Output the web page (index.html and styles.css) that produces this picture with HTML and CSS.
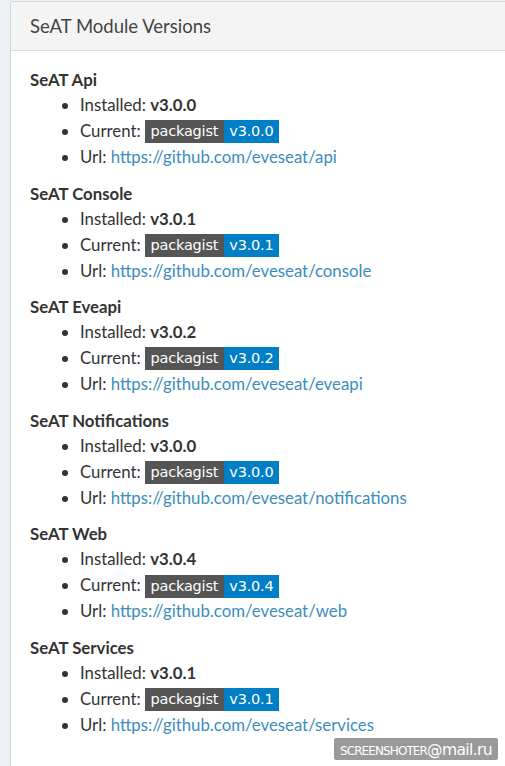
FILE: index.html
```html
<!DOCTYPE html>
<html>
<head>
<meta charset="utf-8">
<link rel="stylesheet" href="styles.css">
</head>
<body>
<div class="card">
  <div class="card-header"><h3 class="title">SeAT Module Versions</h3></div>
  <div class="card-body">
    <div class="module">
      <div class="name">SeAT Api</div>
      <ul>
        <li>Installed: <b>v3.0.0</b></li>
        <li>Current: <span class="badge"><span class="b-l">packagist</span><span class="b-r">v3.0.0</span></span></li>
        <li>Url: <a href="#">https://github.com/eveseat/api</a></li>
      </ul>
    </div>
    <div class="module">
      <div class="name">SeAT Console</div>
      <ul>
        <li>Installed: <b>v3.0.1</b></li>
        <li>Current: <span class="badge"><span class="b-l">packagist</span><span class="b-r">v3.0.1</span></span></li>
        <li>Url: <a href="#">https://github.com/eveseat/console</a></li>
      </ul>
    </div>
    <div class="module">
      <div class="name">SeAT Eveapi</div>
      <ul>
        <li>Installed: <b>v3.0.2</b></li>
        <li>Current: <span class="badge"><span class="b-l">packagist</span><span class="b-r">v3.0.2</span></span></li>
        <li>Url: <a href="#">https://github.com/eveseat/eveapi</a></li>
      </ul>
    </div>
    <div class="module">
      <div class="name">SeAT Notifications</div>
      <ul>
        <li>Installed: <b>v3.0.0</b></li>
        <li>Current: <span class="badge"><span class="b-l">packagist</span><span class="b-r">v3.0.0</span></span></li>
        <li>Url: <a href="#">https://github.com/eveseat/notifications</a></li>
      </ul>
    </div>
    <div class="module">
      <div class="name">SeAT Web</div>
      <ul>
        <li>Installed: <b>v3.0.4</b></li>
        <li>Current: <span class="badge"><span class="b-l">packagist</span><span class="b-r">v3.0.4</span></span></li>
        <li>Url: <a href="#">https://github.com/eveseat/web</a></li>
      </ul>
    </div>
    <div class="module">
      <div class="name">SeAT Services</div>
      <ul>
        <li>Installed: <b>v3.0.1</b></li>
        <li>Current: <span class="badge"><span class="b-l">packagist</span><span class="b-r">v3.0.1</span></span></li>
        <li>Url: <a href="#">https://github.com/eveseat/services</a></li>
      </ul>
    </div>
  </div>
</div>
<div class="watermark"><span class="wm-a">SCREENSHOTER</span><span class="wm-b">@mail.ru</span></div>
</body>
</html>
```
FILE: styles.css
```css
html, body {
  margin: 0;
  padding: 0;
}
body {
  background: #ecf0f5;
  font-family: "Lato", "Open Sans", sans-serif;
  font-size: 16.8px;
  color: #333;
  padding: 1px 0 0 10px;
  height: 765px;
  overflow: hidden;
}
.card {
  background: #fff;
  border: 1px solid #d2d6de;
  border-right: none;
  border-radius: 3px 0 0 0;
  min-height: 800px;
}
.card-header {
  background: #f4f4f4;
  border-bottom: 1px solid #dcdcdc;
  height: 48px;
  display: flex;
  align-items: center;
  padding-left: 19px;
}
.title {
  margin: 0;
  font-weight: 400;
  font-size: 18.5px;
  color: #444;
}
.card-body {
  padding: 17px 19px 0 19px;
}
.module {
  margin-bottom: 11.6px;
}
.name {
  font-weight: 700;
  line-height: 24px;
}
ul {
  margin: 0;
  padding-left: 50px;
}
li {
  line-height: 26px;
  height: 26px;
}
b {
  font-weight: 700;
}
a {
  color: #3c8dbc;
  text-decoration: none;
}
.badge {
  display: inline-flex;
  height: 23px;
  line-height: 23px;
  vertical-align: middle;
  color: #fff;
  font-family: "DejaVu Sans", sans-serif;
  font-size: 14.5px;
  margin-left: 0;
  position: relative;
  top: -1px;
}
.b-l {
  background: #555;
  width: 79px;
  text-align: center;
  letter-spacing: -0.2px;
}
.b-r {
  background: #007ec6;
  width: 55px;
  text-align: center;
  letter-spacing: -0.2px;
}
.watermark {
  position: absolute;
  left: 334px;
  top: 738px;
  width: 164px;
  height: 22px;
  background: #9a9a9a;
  color: #fff;
  line-height: 22px;
  text-align: center;
  border-radius: 2px;
  font-family: "DejaVu Sans", sans-serif;
  white-space: nowrap;
}
.wm-a {
  font-size: 12px;
  letter-spacing: -0.9px;
}
.wm-b {
  font-size: 15.5px;
  letter-spacing: -0.6px;
}
```
